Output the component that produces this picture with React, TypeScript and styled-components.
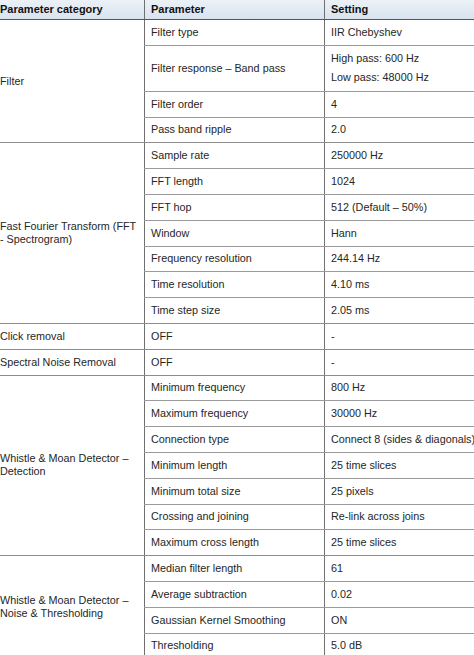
import React from "react";
import styled, { createGlobalStyle } from "styled-components";

const GlobalStyle = createGlobalStyle`
  html, body {
    margin: 0;
    padding: 0;
    background: #ffffff;
  }
  body {
    font-family: "Liberation Sans", Arial, sans-serif;
    color: #262626;
  }
`;

const ROW = 25.8;
const TALL_ROW = 46;

const Frame = styled.div`
  width: 474px;
  height: 655px;
  overflow: hidden;
  background: #fff;
`;

const Table = styled.div`
  width: 520px;
  margin-left: -2px;
  font-size: 10.8px;
  line-height: 13px;
`;

const Header = styled.div`
  display: grid;
  grid-template-columns: 146px 180px 194px;
  height: 20px;
  box-sizing: border-box;
  background: linear-gradient(#ebf1f7, #d9e3ee);
  border-bottom: 1px solid #555;
`;

const HeadCell = styled.div<{ $first?: boolean }>`
  display: flex;
  align-items: center;
  padding-left: ${(p) => (p.$first ? "2px" : "6px")};
  font-weight: bold;
  font-size: 11px;
  color: #111;
  border-left: ${(p) => (p.$first ? "none" : "1px solid #6f6f6f")};
`;

const Group = styled.div`
  display: flex;
  border-bottom: 1px solid #8c8c8c;
`;

const Category = styled.div`
  width: 146px;
  flex-shrink: 0;
  box-sizing: border-box;
  padding: 0 1px 0 2px;
  display: flex;
  align-items: center;
`;

const Rows = styled.div`
  flex: 1;
  display: flex;
  flex-direction: column;
`;

const Row = styled.div<{ $tall: boolean; $last: boolean }>`
  display: grid;
  grid-template-columns: 180px 194px;
  height: ${(p) => (p.$tall ? TALL_ROW : ROW) - (p.$last ? 1 : 0)}px;
  box-sizing: border-box;
  border-bottom: ${(p) => (p.$last ? "none" : "1px solid #9a9a9a")};
`;

const Cell = styled.div`
  display: flex;
  align-items: center;
  padding: 0 4px 0 6px;
  border-left: 1px solid #6f6f6f;
  white-space: nowrap;
`;

const Stack = styled.div`
  display: flex;
  flex-direction: column;
  gap: 6px;
`;

type Item = [string, string | string[]];
type GroupData = { name: string; rows: Item[] };

const groups: GroupData[] = [
  {
    name: "Filter",
    rows: [
      ["Filter type", "IIR Chebyshev"],
      ["Filter response – Band pass", ["High pass: 600 Hz", "Low pass: 48000 Hz"]],
      ["Filter order", "4"],
      ["Pass band ripple", "2.0"],
    ],
  },
  {
    // word joiner keeps "- Spectrogram)" together on the second line
    name: "Fast Fourier Transform (FFT -\u2060\u00a0Spectrogram)",
    rows: [
      ["Sample rate", "250000 Hz"],
      ["FFT length", "1024"],
      ["FFT hop", "512 (Default – 50%)"],
      ["Window", "Hann"],
      ["Frequency resolution", "244.14 Hz"],
      ["Time resolution", "4.10 ms"],
      ["Time step size", "2.05 ms"],
    ],
  },
  { name: "Click removal", rows: [["OFF", "-"]] },
  { name: "Spectral Noise Removal", rows: [["OFF", "-"]] },
  {
    name: "Whistle & Moan Detector – Detection",
    rows: [
      ["Minimum frequency", "800 Hz"],
      ["Maximum frequency", "30000 Hz"],
      ["Connection type", "Connect 8 (sides & diagonals)"],
      ["Minimum length", "25 time slices"],
      ["Minimum total size", "25 pixels"],
      ["Crossing and joining", "Re-link across joins"],
      ["Maximum cross length", "25 time slices"],
    ],
  },
  {
    name: "Whistle & Moan Detector – Noise & Thresholding",
    rows: [
      ["Median filter length", "61"],
      ["Average subtraction", "0.02"],
      ["Gaussian Kernel Smoothing", "ON"],
      ["Thresholding", "5.0 dB"],
    ],
  },
];

export default function App() {
  return (
    <Frame>
      <GlobalStyle />
      <Table>
        <Header>
          <HeadCell $first>Parameter category</HeadCell>
          <HeadCell>Parameter</HeadCell>
          <HeadCell>Setting</HeadCell>
        </Header>
        {groups.map((g) => (
          <Group key={g.name}>
            <Category>{g.name}</Category>
            <Rows>
              {g.rows.map(([param, setting], i) => (
                <Row
                  key={param + i}
                  $tall={Array.isArray(setting)}
                  $last={i === g.rows.length - 1}
                >
                  <Cell>{param}</Cell>
                  <Cell>
                    {Array.isArray(setting) ? (
                      <Stack>
                        {setting.map((s) => (
                          <span key={s}>{s}</span>
                        ))}
                      </Stack>
                    ) : (
                      setting
                    )}
                  </Cell>
                </Row>
              ))}
            </Rows>
          </Group>
        ))}
      </Table>
    </Frame>
  );
}
